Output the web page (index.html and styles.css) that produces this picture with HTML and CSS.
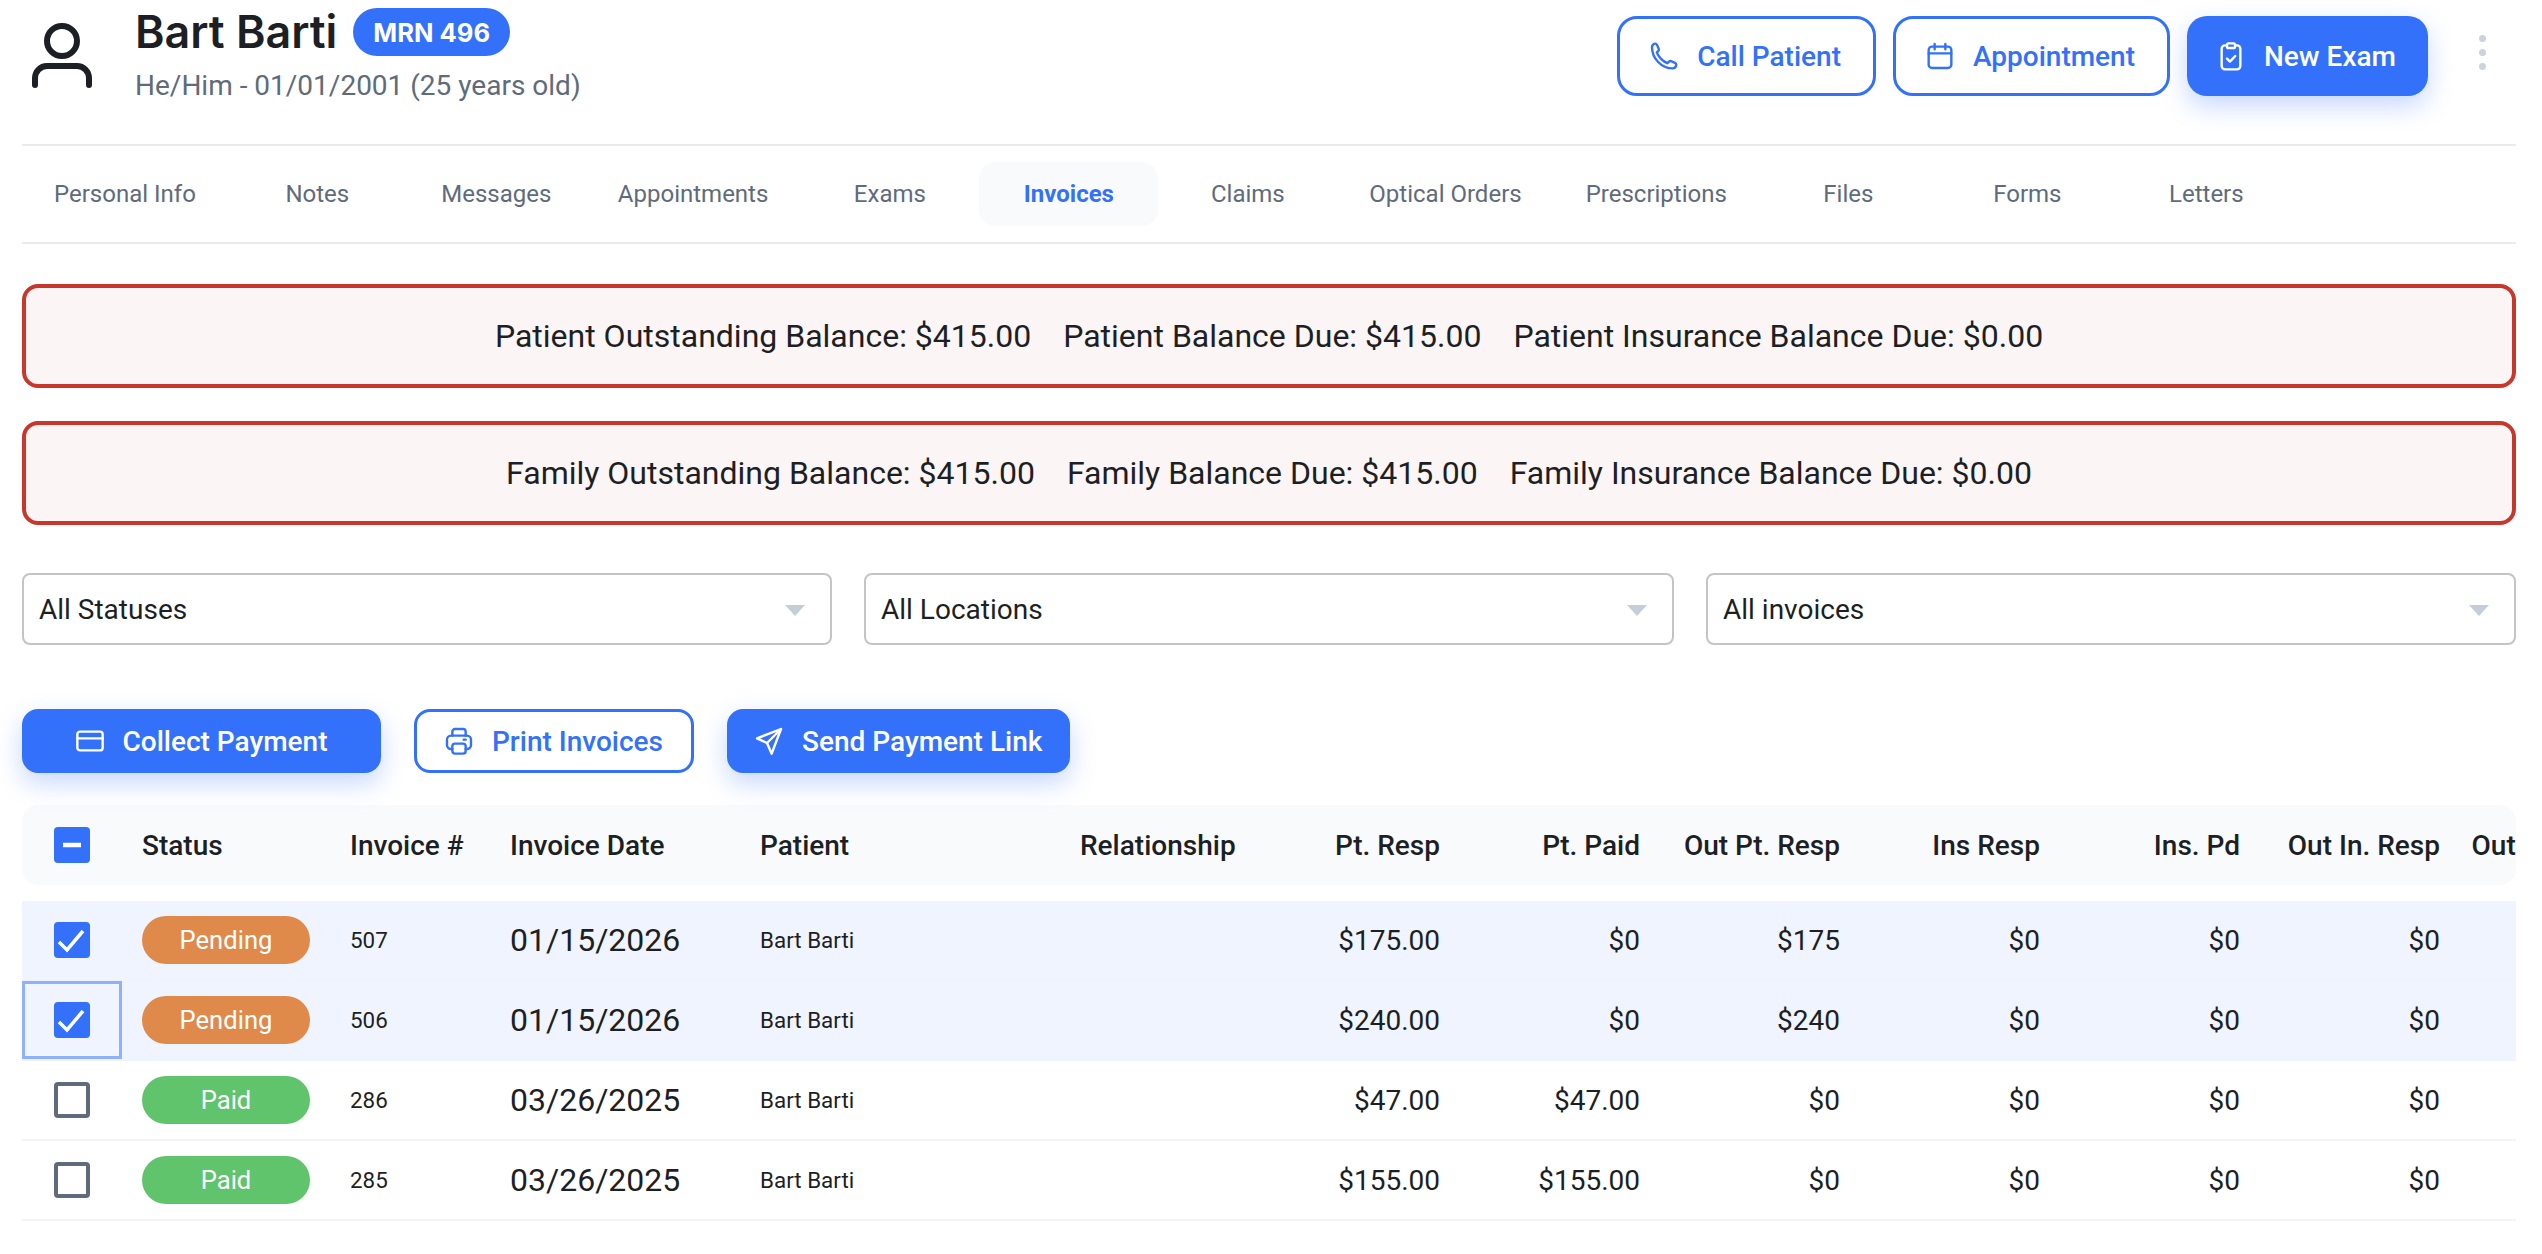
FILE: index.html
```html
<!DOCTYPE html>
<html lang="en">
<head>
    <meta charset="UTF-8">
    <title>Bart Barti - Invoices</title>
    <link rel="stylesheet" href="styles.css">
</head>
<body>
    <header class="patient">
        <svg class="avatar" viewBox="0 0 68 68" fill="none" stroke="#1c1f24" stroke-width="6" stroke-linecap="round">
            <circle cx="34" cy="19" r="15"/>
            <path d="M7 63V56A12 12 0 0 1 19 44H49A12 12 0 0 1 61 56V63"/>
        </svg>
        <div class="who">
            <div class="name-row">
                <h1 class="name">Bart Barti</h1>
                <span class="mrn">MRN 496</span>
            </div>
            <p class="meta">He/Him - 01/01/2001 (25 years old)</p>
        </div>
        <div class="actions">
            <button class="btn outline">
                <svg class="icon" viewBox="0 0 24 24"><path d="M3 5.2C3 3.8 4.3 2.7 5.5 2.7c.6 0 1 .4 1.3 1l1.3 3c.2.5.1 1-.3 1.4L6.6 9.3c1.2 3.4 4.6 6.9 8 8.1l1.2-1.2c.4-.4.9-.5 1.4-.3l3 1.3c.6.3 1 .7 1 1.3 0 1.2-1.1 2.8-2.5 2.8C10 21.3 3 13.8 3 5.2Z"/></svg>
                Call Patient
            </button>
            <button class="btn outline">
                <svg class="icon" viewBox="0 0 24 24"><rect x="3.5" y="5" width="17" height="16" rx="2.5"/><path d="M3.5 10h17M8 3v4M16 3v4"/></svg>
                Appointment
            </button>
            <button class="btn solid">
                <svg class="icon" viewBox="0 0 24 24"><rect x="5" y="4" width="14" height="18" rx="2.5"/><rect x="9" y="2.5" width="6" height="3.5" rx="1" fill="#3371fa"/><path d="M9 14l2.2 2.2L15.2 12"/></svg>
                New Exam
            </button>
            <div class="kebab"><span></span><span></span><span></span></div>
        </div>
    </header>

    <nav class="tabs">
        <a class="tab">Personal Info</a>
        <a class="tab">Notes</a>
        <a class="tab">Messages</a>
        <a class="tab">Appointments</a>
        <a class="tab">Exams</a>
        <a class="tab active">Invoices</a>
        <a class="tab">Claims</a>
        <a class="tab">Optical Orders</a>
        <a class="tab">Prescriptions</a>
        <a class="tab">Files</a>
        <a class="tab">Forms</a>
        <a class="tab">Letters</a>
    </nav>

    <section class="alerts">
        <div class="alert">
            <span>Patient Outstanding Balance: $415.00</span>
            <span>Patient Balance Due: $415.00</span>
            <span>Patient Insurance Balance Due: $0.00</span>
        </div>
        <div class="alert">
            <span>Family Outstanding Balance: $415.00</span>
            <span>Family Balance Due: $415.00</span>
            <span>Family Insurance Balance Due: $0.00</span>
        </div>
    </section>

    <div class="filters">
        <div class="select">All Statuses</div>
        <div class="select">All Locations</div>
        <div class="select">All invoices</div>
    </div>

    <div class="toolbar">
        <button class="btn small solid wide">
            <svg class="icon" viewBox="0 0 24 24"><rect x="2.5" y="5" width="19" height="14" rx="2"/><path d="M2.5 10h19"/></svg>
            Collect Payment
        </button>
        <button class="btn small outline">
            <svg class="icon" viewBox="0 0 24 24"><path d="M7 8V5a2 2 0 0 1 2-2h6a2 2 0 0 1 2 2v3"/><path d="M7 18H6a3 3 0 0 1-3-3v-4a3 3 0 0 1 3-3h12a3 3 0 0 1 3 3v4a3 3 0 0 1-3 3h-1"/><rect x="7" y="14" width="10" height="7.5" rx="2"/><path d="M15.5 11H17"/></svg>
            Print Invoices
        </button>
        <button class="btn small solid">
            <svg class="icon" viewBox="0 0 24 24"><path d="M21 3 3 10l7.5 3.5L14 21.5 21 3Z"/><path d="M21 3 10.5 13.5"/></svg>
            Send Payment Link
        </button>
    </div>

    <div class="table">
        <div class="thead">
            <div class="cols">
                <div class="cell center"><span class="check on"><svg viewBox="0 0 36 36"><path d="M9 18h18" stroke-width="4.5"/></svg></span></div>
                <div class="cell">Status</div>
                <div class="cell">Invoice #</div>
                <div class="cell">Invoice Date</div>
                <div class="cell">Patient</div>
                <div class="cell">Relationship</div>
                <div class="cell num">Pt. Resp</div>
                <div class="cell num">Pt. Paid</div>
                <div class="cell num">Out Pt. Resp</div>
                <div class="cell num">Ins Resp</div>
                <div class="cell num">Ins. Pd</div>
                <div class="cell num">Out In. Resp</div>
                <div class="cell num">Out Fm. Resp</div>
            </div>
        </div>

        <div class="cols row selected">
            <div class="cell center"><span class="check on"><svg viewBox="0 0 36 36"><path d="M5 20l8 8L29 9"/></svg></span></div>
            <div class="cell"><span class="pill pending">Pending</span></div>
            <div class="cell small-text">507</div>
            <div class="cell date">01/15/2026</div>
            <div class="cell small-text">Bart Barti</div>
            <div class="cell"></div>
            <div class="cell num">$175.00</div>
            <div class="cell num">$0</div>
            <div class="cell num">$175</div>
            <div class="cell num">$0</div>
            <div class="cell num">$0</div>
            <div class="cell num">$0</div>
            <div class="cell num">$0</div>
        </div>
        <div class="cols row selected">
            <div class="cell center focused"><span class="check on"><svg viewBox="0 0 36 36"><path d="M5 20l8 8L29 9"/></svg></span></div>
            <div class="cell"><span class="pill pending">Pending</span></div>
            <div class="cell small-text">506</div>
            <div class="cell date">01/15/2026</div>
            <div class="cell small-text">Bart Barti</div>
            <div class="cell"></div>
            <div class="cell num">$240.00</div>
            <div class="cell num">$0</div>
            <div class="cell num">$240</div>
            <div class="cell num">$0</div>
            <div class="cell num">$0</div>
            <div class="cell num">$0</div>
            <div class="cell num">$0</div>
        </div>
        <div class="cols row">
            <div class="cell center"><span class="check"></span></div>
            <div class="cell"><span class="pill paid">Paid</span></div>
            <div class="cell small-text">286</div>
            <div class="cell date">03/26/2025</div>
            <div class="cell small-text">Bart Barti</div>
            <div class="cell"></div>
            <div class="cell num">$47.00</div>
            <div class="cell num">$47.00</div>
            <div class="cell num">$0</div>
            <div class="cell num">$0</div>
            <div class="cell num">$0</div>
            <div class="cell num">$0</div>
            <div class="cell num">$0</div>
        </div>
        <div class="cols row">
            <div class="cell center"><span class="check"></span></div>
            <div class="cell"><span class="pill paid">Paid</span></div>
            <div class="cell small-text">285</div>
            <div class="cell date">03/26/2025</div>
            <div class="cell small-text">Bart Barti</div>
            <div class="cell"></div>
            <div class="cell num">$155.00</div>
            <div class="cell num">$155.00</div>
            <div class="cell num">$0</div>
            <div class="cell num">$0</div>
            <div class="cell num">$0</div>
            <div class="cell num">$0</div>
            <div class="cell num">$0</div>
        </div>
    </div>
</body>
</html>
```

FILE: styles.css
```css
* {
    box-sizing: border-box;
}

body {
    margin: 0;
    padding: 0 26px 0 22px;
    background: #ffffff;
    color: #1c1f24;
    font-family: Roboto, sans-serif;
    overflow: hidden;
}

/* Patient header */
.patient {
    display: flex;
    height: 146px;
    border-bottom: 2px solid #e9ebee;
}

.avatar {
    width: 68px;
    height: 68px;
    margin: 22px 0 0 6px;
    flex: none;
}

.who {
    margin-left: 39px;
}

.name-row {
    display: flex;
    align-items: center;
    gap: 16px;
    height: 64px;
}

.name {
    margin: 0;
    font-family: Inter, sans-serif;
    font-size: 44.8px;
    font-weight: 600;
}

.mrn {
    display: flex;
    align-items: center;
    height: 48px;
    padding: 0 20px;
    border-radius: 24px;
    background: #3371fa;
    color: #ffffff;
    font-family: Inter, sans-serif;
    font-size: 25.6px;
    font-weight: 700;
}

.meta {
    margin: 5px 0 0;
    font-size: 28px;
    color: #5f6b7a;
}

.actions {
    display: flex;
    gap: 17px;
    margin-left: auto;
    padding-top: 16px;
}

.btn {
    display: flex;
    align-items: center;
    gap: 17px;
    height: 80px;
    padding: 0 32px 0 28px;
    border-radius: 20px;
    font-family: Roboto, sans-serif;
    font-size: 28px;
    font-weight: 500;
    white-space: nowrap;
}

.btn.small {
    height: 64px;
    border-radius: 16px;
}

.btn.wide {
    justify-content: center;
    width: 359px;
}

.btn.outline {
    background: #ffffff;
    border: 3px solid #3371fa;
    color: #3371fa;
}

.btn.solid {
    background: #3371fa;
    border: none;
    color: #ffffff;
    box-shadow: 0 10px 26px rgba(51, 113, 250, 0.28);
}

.icon {
    width: 32px;
    height: 32px;
    flex: none;
    fill: none;
    stroke: currentColor;
    stroke-width: 1.8;
    stroke-linecap: round;
    stroke-linejoin: round;
}

.kebab {
    display: flex;
    flex-direction: column;
    gap: 7px;
    margin: 19px 30px 0 34px;
}

.kebab span {
    width: 7px;
    height: 7px;
    border-radius: 50%;
    background: #cdd2dd;
}

/* Tabs */
.tabs {
    display: flex;
    align-items: center;
    height: 98px;
    border-bottom: 2px solid #e9ebee;
}

.tab {
    display: flex;
    align-items: center;
    justify-content: center;
    min-width: 179px;
    height: 64px;
    padding: 0 32px;
    border-radius: 16px;
    font-size: 24px;
    color: #5f6b7a;
}

.tab.active {
    background: #f9fafc;
    color: #3371fa;
    font-weight: 700;
}

/* Balance alerts */
.alerts {
    display: flex;
    flex-direction: column;
    gap: 33px;
    margin-top: 40px;
}

.alert {
    display: flex;
    align-items: center;
    justify-content: center;
    gap: 32px;
    height: 104px;
    border: 4px solid #c9372c;
    border-radius: 16px;
    background: #fcf5f5;
    font-size: 32px;
}

/* Filters */
.filters {
    display: grid;
    grid-template-columns: repeat(3, 1fr);
    gap: 32px;
    margin-top: 48px;
}

.select {
    position: relative;
    display: flex;
    align-items: center;
    height: 72px;
    padding-left: 15px;
    border: 2px solid #c4c4c4;
    border-radius: 8px;
    font-size: 28px;
}

.select::after {
    content: "";
    position: absolute;
    right: 25px;
    top: 30px;
    border-left: 10px solid transparent;
    border-right: 10px solid transparent;
    border-top: 11px solid #c5cdd9;
}

/* Toolbar */
.toolbar {
    display: flex;
    gap: 33px;
    margin-top: 64px;
}

.toolbar .btn {
    padding: 0 28px 0 26px;
}

/* Invoice table */
.table {
    margin-top: 32px;
    overflow: hidden;
}

.cols {
    display: grid;
    grid-template-columns: 100px 208px 160px 250px 320px 200px repeat(6, 200px) 200px;
    width: max-content;
}

.thead {
    height: 80px;
    margin-bottom: 16px;
    border-radius: 16px;
    background: #f9fafc;
    overflow: hidden;
}

.thead .cols {
    height: 100%;
    font-size: 28px;
    font-weight: 500;
}

.row {
    height: 80px;
    min-width: 100%;
    border-bottom: 2px solid #f3f4f8;
    font-size: 28px;
}

.row.selected {
    background: #f0f4fe;
    border-bottom-color: #eff3fd;
}

.cell {
    display: flex;
    align-items: center;
    padding: 0 20px;
    white-space: nowrap;
}

.cell.center {
    justify-content: center;
    padding: 0;
}

.cell.num {
    justify-content: flex-end;
}

.cell.focused {
    outline: 3px solid #8fb0fb;
    outline-offset: -3px;
}

.small-text {
    font-size: 22.4px;
}

.date {
    font-size: 32px;
}

.check {
    display: block;
    width: 36px;
    height: 36px;
    border: 4px solid #5f6b7a;
    border-radius: 4px;
}

.check.on {
    background: #3371fa;
    border: none;
}

.check svg {
    display: block;
    fill: none;
    stroke: #ffffff;
    stroke-width: 3.5;
}

.pill {
    display: flex;
    align-items: center;
    justify-content: center;
    width: 168px;
    height: 48px;
    border-radius: 24px;
    color: #ffffff;
    font-size: 25.6px;
}

.pill.pending {
    background: #df8a4b;
}

.pill.paid {
    background: #5fc46c;
}
```
